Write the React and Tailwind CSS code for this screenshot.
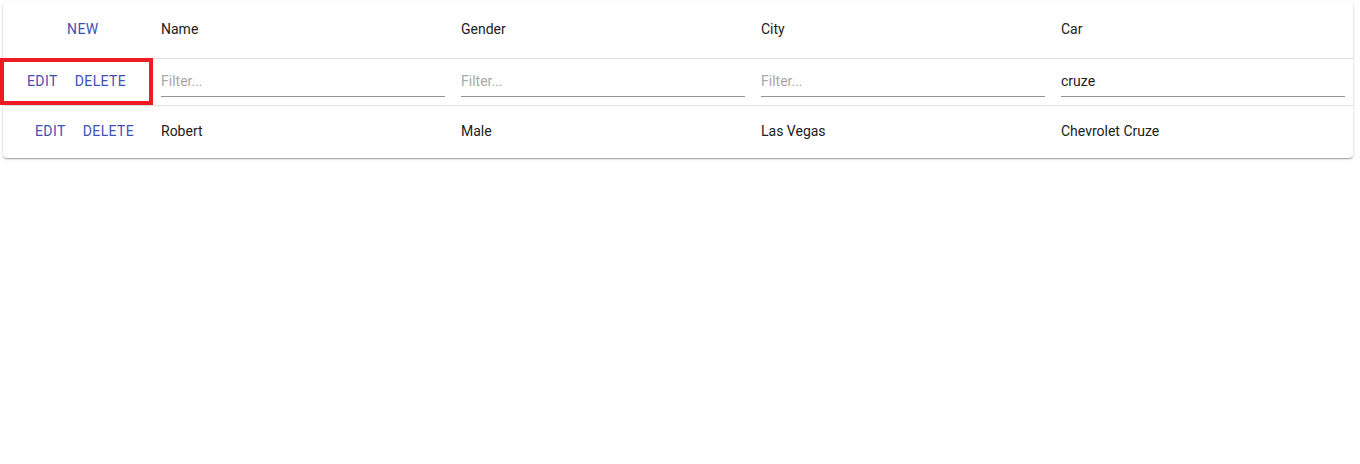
import React, { useState } from 'react';

const columns = ['Name', 'Gender', 'City', 'Car'];

const rows = [{ id: 1, name: 'Robert', gender: 'Male', city: 'Las Vegas', car: 'Chevrolet Cruze' }];

const ActionButton = ({ children }) => (
  <button
    type="button"
    className="text-[14px] leading-none tracking-[0.4px] uppercase text-[#3f51b5] bg-transparent"
  >
    {children}
  </button>
);

const App = () => {
  const [filters, setFilters] = useState({ Name: '', Gender: '', City: '', Car: 'cruze' });

  return (
    <div className="min-h-[464px] bg-white pt-[2px] pl-[3px]" style={{ fontFamily: 'Roboto, "Liberation Sans", sans-serif' }}>
      <div className="w-[1350px] rounded bg-white shadow-[0_1px_3px_0_rgba(0,0,0,0.2),0_1px_1px_0_rgba(0,0,0,0.14),0_2px_1px_-1px_rgba(0,0,0,0.12)]">
        {/* header */}
        <div className="flex h-[57px] items-center border-b border-[#e0e0e0] pb-[2px]">
          <div className="w-[150px] pl-[64px]">
            <ActionButton>New</ActionButton>
          </div>
          {columns.map((col) => (
            <div key={col} className="w-[300px] px-2 text-[14px] text-[#212121]">
              {col}
            </div>
          ))}
        </div>

        {/* filter row */}
        <div className="relative flex h-[47px] items-center border-b border-[#e0e0e0] pb-[2px]">
          <div className="absolute left-[-3px] top-[-1px] h-[47px] w-[153px] border-[4px] border-[#ed1c24]" />
          <div className="flex w-[150px] gap-[17px] pl-[24px]">
            <ActionButton>Edit</ActionButton>
            <ActionButton>Delete</ActionButton>
          </div>
          {columns.map((col) => (
            <div key={col} className="w-[300px] px-2 pt-[4px]">
              <input
                value={filters[col]}
                onChange={(event) => setFilters({ ...filters, [col]: event.target.value })}
                placeholder="Filter..."
                className="w-full border-b border-[#949494] pb-[4px] text-[14px] text-[#212121] outline-none placeholder:text-[#a8a8a8]"
              />
            </div>
          ))}
        </div>

        {/* data rows */}
        {rows.map((row) => (
          <div key={row.id} className="flex h-[52px] items-center pb-[2px]">
            <div className="flex w-[150px] gap-[17px] pl-[32px]">
              <ActionButton>Edit</ActionButton>
              <ActionButton>Delete</ActionButton>
            </div>
            {[row.name, row.gender, row.city, row.car].map((value, i) => (
              <div key={i} className="w-[300px] px-2 text-[14px] text-[#212121]">
                {value}
              </div>
            ))}
          </div>
        ))}
      </div>
    </div>
  );
};

export default App;
